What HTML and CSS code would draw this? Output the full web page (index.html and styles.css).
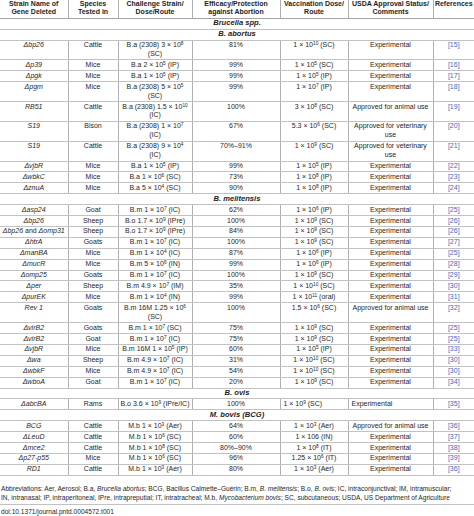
FILE: index.html
```html
<!DOCTYPE html>
<html>
<head>
<meta charset="utf-8">
<link rel="stylesheet" href="styles.css">
</head>
<body>
<table class="tbl">
<colgroup>
<col class="c1"><col class="c2"><col class="c3"><col class="c4"><col class="c5"><col class="c6"><col class="c7">
</colgroup>
<thead>
<tr class="head">
<th>Strain Name of<br>Gene Deleted</th>
<th>Species<br>Tested in</th>
<th>Challenge Strain/<br>Dose/Route</th>
<th>Efficacy/Protection<br>against Abortion</th>
<th>Vaccination Dose/<br>Route</th>
<th>USDA Approval Status/<br>Comments</th>
<th>References</th>
</tr>
</thead>
<tbody>
<tr class="sec"><td colspan="7">Brucella spp.</td></tr>
<tr class="sec"><td colspan="7">B. abortus</td></tr>
<tr><td class="st">Δbp26</td><td>Cattle</td><td>B.a (2308) 3 × 10<sup>8</sup><br>(SC)</td><td>81%</td><td>1 × 10<sup>10</sup> (SC)</td><td>Experimental</td><td class="ref">[15]</td></tr>
<tr><td class="st">Δp39</td><td>Mice</td><td>B.a 2 × 10<sup>5</sup> (IP)</td><td>99%</td><td>1 × 10<sup>5</sup> (SC)</td><td>Experimental</td><td class="ref">[16]</td></tr>
<tr><td class="st">Δpgk</td><td>Mice</td><td>B.a 1 × 10<sup>5</sup> (IP)</td><td>99%</td><td>1 × 10<sup>5</sup> (IP)</td><td>Experimental</td><td class="ref">[17]</td></tr>
<tr><td class="st">Δpgm</td><td>Mice</td><td>B.a (2308) 5 × 10<sup>5</sup><br>(SC)</td><td>99%</td><td>1 × 10<sup>7</sup> (IP)</td><td>Experimental</td><td class="ref">[18]</td></tr>
<tr><td class="st">RB51</td><td>Cattle</td><td>B.a (2308) 1.5 × 10<sup>10</sup><br>(IC)</td><td>100%</td><td>3 × 10<sup>8</sup> (SC)</td><td>Approved for animal use</td><td class="ref">[19]</td></tr>
<tr><td class="st">S19</td><td>Bison</td><td>B.a (2308) 1 × 10<sup>7</sup><br>(IC)</td><td>67%</td><td>5.3 × 10<sup>6</sup> (SC)</td><td>Approved for veterinary<br>use</td><td class="ref">[20]</td></tr>
<tr><td class="st">S19</td><td>Cattle</td><td>B.a (2308) 9 × 10<sup>4</sup><br>(IC)</td><td>70%–91%</td><td>1 × 10<sup>9</sup> (SC)</td><td>Approved for veterinary<br>use</td><td class="ref">[21]</td></tr>
<tr><td class="st">ΔvjbR</td><td>Mice</td><td>B.a 1 × 10<sup>5</sup> (IP)</td><td>99%</td><td>1 × 10<sup>5</sup> (IP)</td><td>Experimental</td><td class="ref">[22]</td></tr>
<tr><td class="st">ΔwbkC</td><td>Mice</td><td>B.a 1 × 10<sup>6</sup> (SC)</td><td>73%</td><td>1 × 10<sup>8</sup> (IP)</td><td>Experimental</td><td class="ref">[23]</td></tr>
<tr><td class="st">ΔznuA</td><td>Mice</td><td>B.a 5 × 10<sup>4</sup> (SC)</td><td>90%</td><td>1 × 10<sup>8</sup> (IP)</td><td>Experimental</td><td class="ref">[24]</td></tr>
<tr class="sec"><td colspan="7">B. melitensis</td></tr>
<tr><td class="st">Δasp24</td><td>Goat</td><td>B.m 1 × 10<sup>7</sup> (IC)</td><td>62%</td><td>1 × 10<sup>6</sup> (IP)</td><td>Experimental</td><td class="ref">[25]</td></tr>
<tr><td class="st">Δbp26</td><td>Sheep</td><td>B.o 1.7 × 10<sup>9</sup> (IPre)</td><td>100%</td><td>1 × 10<sup>9</sup> (SC)</td><td>Experimental</td><td class="ref">[26]</td></tr>
<tr><td class="st">Δbp26 <span class="up">and</span> Δomp31</td><td>Sheep</td><td>B.o 1.7 × 10<sup>9</sup> (IPre)</td><td>84%</td><td>1 × 10<sup>9</sup> (SC)</td><td>Experimental</td><td class="ref">[26]</td></tr>
<tr><td class="st">ΔhtrA</td><td>Goats</td><td>B.m 1 × 10<sup>7</sup> (IC)</td><td>100%</td><td>1 × 10<sup>9</sup> (SC)</td><td>Experimental</td><td class="ref">[27]</td></tr>
<tr><td class="st">ΔmanBA</td><td>Mice</td><td>B.m 1 × 10<sup>4</sup> (IC)</td><td>87%</td><td>1 × 10<sup>6</sup> (IP)</td><td>Experimental</td><td class="ref">[25]</td></tr>
<tr><td class="st">ΔmucR</td><td>Mice</td><td>B.m 5 × 10<sup>6</sup> (IN)</td><td>99%</td><td>1 × 10<sup>6</sup> (IP)</td><td>Experimental</td><td class="ref">[28]</td></tr>
<tr><td class="st">Δomp25</td><td>Goats</td><td>B.m 1 × 10<sup>7</sup> (IC)</td><td>100%</td><td>1 × 10<sup>9</sup> (SC)</td><td>Experimental</td><td class="ref">[29]</td></tr>
<tr><td class="st">Δper</td><td>Sheep</td><td>B.m 4.9 × 10<sup>7</sup> (IM)</td><td>35%</td><td>1 × 10<sup>10</sup> (SC)</td><td>Experimental</td><td class="ref">[30]</td></tr>
<tr><td class="st">ΔpurEK</td><td>Mice</td><td>B.m 1 × 10<sup>4</sup> (IN)</td><td>99%</td><td>1 × 10<sup>11</sup> (oral)</td><td>Experimental</td><td class="ref">[31]</td></tr>
<tr><td class="st">Rev 1</td><td>Goats</td><td>B.m 16M 1.25 × 10<sup>6</sup><br>(SC)</td><td>100%</td><td>1.5 × 10<sup>6</sup> (SC)</td><td>Approved for animal use</td><td class="ref">[32]</td></tr>
<tr><td class="st">ΔvirB2</td><td>Goats</td><td>B.m 1 × 10<sup>7</sup> (SC)</td><td>75%</td><td>1 × 10<sup>9</sup> (SC)</td><td>Experimental</td><td class="ref">[25]</td></tr>
<tr><td class="st">ΔvirB2</td><td>Goat</td><td>B.m 1 × 10<sup>7</sup> (IC)</td><td>75%</td><td>1 × 10<sup>9</sup> (SC)</td><td>Experimental</td><td class="ref">[25]</td></tr>
<tr><td class="st">ΔvjbR</td><td>Mice</td><td>B.m 16M 1 × 10<sup>5</sup> (IP)</td><td>60%</td><td>1 × 10<sup>5</sup> (IP)</td><td>Experimental</td><td class="ref">[33]</td></tr>
<tr><td class="st">Δwa</td><td>Sheep</td><td>B.m 4.9 × 10<sup>7</sup> (IC)</td><td>31%</td><td>1 × 10<sup>10</sup> (SC)</td><td>Experimental</td><td class="ref">[30]</td></tr>
<tr><td class="st">ΔwbkF</td><td>Mice</td><td>B.m 4.9 × 10<sup>7</sup> (IC)</td><td>54%</td><td>1 × 10<sup>10</sup> (SC)</td><td>Experimental</td><td class="ref">[30]</td></tr>
<tr><td class="st">ΔwboA</td><td>Goat</td><td>B.m 1 × 10<sup>7</sup> (IC)</td><td>20%</td><td>1 × 10<sup>9</sup> (SC)</td><td>Experimental</td><td class="ref">[34]</td></tr>
<tr class="sec"><td colspan="7">B. ovis</td></tr>
<tr><td class="st">ΔabcBA</td><td>Rams</td><td>B.o 3.6 × 10<sup>9</sup> (IPre/IC)</td><td>100%</td><td class="lft">1 × 10<sup>9</sup> (SC)</td><td class="lft">Experimental</td><td class="ref">[35]</td></tr>
<tr class="sec"><td colspan="7">M. bovis (BCG)</td></tr>
<tr><td class="st">BCG</td><td>Cattle</td><td>M.b 1 × 10<sup>3</sup> (Aer)</td><td>64%</td><td>1 × 10<sup>3</sup> (Aer)</td><td>Approved for animal use</td><td class="ref">[36]</td></tr>
<tr><td class="st">ΔLeuD</td><td>Cattle</td><td>M.b 1 × 10<sup>6</sup> (SC)</td><td>60%</td><td>1 × 106 (IN)</td><td>Experimental</td><td class="ref">[37]</td></tr>
<tr><td class="st">Δmce2</td><td>Cattle</td><td>M.b 1 × 10<sup>8</sup> (SC)</td><td>80%–90%</td><td>1 × 10<sup>8</sup> (IT)</td><td>Experimental</td><td class="ref">[38]</td></tr>
<tr><td class="st">Δp27-p55</td><td>Mice</td><td>M.b 1 × 10<sup>6</sup> (SC)</td><td>96%</td><td>1.25 × 10<sup>6</sup> (IT)</td><td>Experimental</td><td class="ref">[39]</td></tr>
<tr><td class="st">RD1</td><td>Cattle</td><td>M.b 1 × 10<sup>3</sup> (Aer)</td><td>80%</td><td>1 × 10<sup>3</sup> (Aer)</td><td>Experimental</td><td class="ref">[36]</td></tr>
</tbody>
</table>
<div class="notes">
<p class="abbr">Abbreviations: Aer, Aerosol; B.a, <i>Brucella abortus</i>; BCG, Bacillus Calmette–Guérin; B.m, <i>B. melitensis</i>; B.o, <i>B. ovis</i>; IC, intraconjunctival; IM, intramuscular;<br>IN, intranasal; IP, intraperitoneal, IPre, intrapreputial; IT, intratracheal; M.b, <i>Mycobacterium bovis</i>; SC, subcutaneous; USDA, US Department of Agriculture</p>
<p class="doi">doi:10.1371/journal.pntd.0004572.t001</p>
</div>
</body>
</html>
```
FILE: styles.css
```css
html, body {
  margin: 0;
  padding: 0;
  background: #ffffff;
}
body {
  font-family: "Liberation Sans Narrow", "Liberation Sans", Arial, sans-serif;
  color: #262626;
  width: 474px;
  overflow: hidden;
}
.tbl {
  width: 474px;
  border-collapse: collapse;
  table-layout: fixed;
  margin-top: -1px;
  font-size: 7px;
  line-height: 8.9px;
}
.c1 { width: 68px; }
.c2 { width: 50px; }
.c3 { width: 74px; }
.c4 { width: 88px; }
.c5 { width: 68px; }
.c6 { width: 85px; }
.c7 { width: 41px; }
.tbl th,
.tbl td {
  padding: 0.5px 1px;
  border-bottom: 1px solid #c2c2c2;
  border-left: 1px solid #b0b0b0;
  vertical-align: top;
  text-align: center;
  white-space: nowrap;
  overflow: hidden;
  font-weight: normal;
}
.tbl th:first-child,
.tbl td:first-child {
  border-left: none;
}
.head th {
  font-weight: bold;
  color: #1e1e1e;
  border-bottom: 1px solid #a4a4a4;
}
.sec td {
  font-weight: bold;
  font-style: italic;
  font-size: 7.6px;
  color: #1e1e1e;
}
.st {
  font-style: italic;
}
.up {
  font-style: normal;
}
.ref {
  color: #3b6cc0;
}
.lft {
  text-align: left !important;
  padding-left: 3px !important;
}
sup {
  font-size: 0.68em;
  line-height: 0;
  vertical-align: 0.5em;
}
.notes {
  font-size: 6.6px;
  line-height: 9px;
  color: #262626;
}
.notes p {
  margin: 0;
}
.abbr {
  padding: 8px 0 2px 1px;
  border-bottom: 1px solid #c2c2c2;
}
.doi {
  padding: 2px 0 0 1px;
}
```
